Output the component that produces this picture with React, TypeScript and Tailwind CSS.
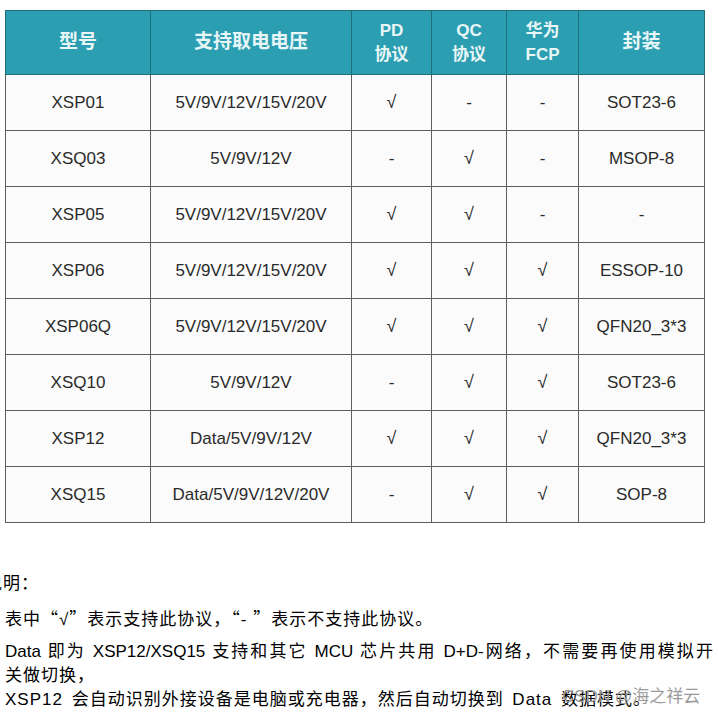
import React from "react";

type Row = {
  model: string;
  voltage: string;
  pd: boolean;
  qc: boolean;
  fcp: boolean;
  pkg: string;
};

const rows: Row[] = [
  { model: "XSP01", voltage: "5V/9V/12V/15V/20V", pd: true, qc: false, fcp: false, pkg: "SOT23-6" },
  { model: "XSQ03", voltage: "5V/9V/12V", pd: false, qc: true, fcp: false, pkg: "MSOP-8" },
  { model: "XSP05", voltage: "5V/9V/12V/15V/20V", pd: true, qc: true, fcp: false, pkg: "-" },
  { model: "XSP06", voltage: "5V/9V/12V/15V/20V", pd: true, qc: true, fcp: true, pkg: "ESSOP-10" },
  { model: "XSP06Q", voltage: "5V/9V/12V/15V/20V", pd: true, qc: true, fcp: true, pkg: "QFN20_3*3" },
  { model: "XSQ10", voltage: "5V/9V/12V", pd: false, qc: true, fcp: true, pkg: "SOT23-6" },
  { model: "XSP12", voltage: "Data/5V/9V/12V", pd: true, qc: true, fcp: true, pkg: "QFN20_3*3" },
  { model: "XSQ15", voltage: "Data/5V/9V/12V/20V", pd: false, qc: true, fcp: true, pkg: "SOP-8" },
];

const font = "font-['Liberation_Sans','Noto_Sans_CJK_SC',sans-serif]";
const cjk = "font-['Noto_Sans_CJK_SC',sans-serif]";

function Mark({ on }: { on: boolean }) {
  return <span className={on ? "text-[18px]" : ""}>{on ? "√" : "-"}</span>;
}

export default function App() {
  const th = "border border-[#1d6f7b] text-center align-middle font-bold text-[#e9f6f8]";
  const td = "border border-[#5e5e5e] text-center align-middle";

  return (
    <div className={`relative h-[718px] w-[718px] overflow-hidden bg-white text-[#2a2a2a] ${font}`}>
      <table className="ml-[5px] mt-[10px] w-[699px] table-fixed border-collapse">
        <colgroup>
          <col className="w-[145px]" />
          <col className="w-[201px]" />
          <col className="w-[80px]" />
          <col className="w-[75px]" />
          <col className="w-[72px]" />
          <col className="w-[126px]" />
        </colgroup>
        <thead>
          <tr className="h-[64px] bg-[#2b9fb1]">
            <th className={`${th} text-[19px]`}>型号</th>
            <th className={`${th} text-[19px]`}>支持取电电压</th>
            <th className={`${th} text-[17px] leading-[24px]`}>
              PD
              <br />
              协议
            </th>
            <th className={`${th} text-[17px] leading-[24px]`}>
              QC
              <br />
              协议
            </th>
            <th className={`${th} text-[17px] leading-[24px]`}>
              华为
              <br />
              FCP
            </th>
            <th className={`${th} text-[19px]`}>封装</th>
          </tr>
        </thead>
        <tbody className="bg-[#fbfbfb] text-[17px]">
          {rows.map((row) => (
            <tr key={row.model} className="h-[56px]">
              <td className={td}>{row.model}</td>
              <td className={td}>{row.voltage}</td>
              <td className={td}>
                <Mark on={row.pd} />
              </td>
              <td className={td}>
                <Mark on={row.qc} />
              </td>
              <td className={td}>
                <Mark on={row.fcp} />
              </td>
              <td className={td}>{row.pkg}</td>
            </tr>
          ))}
        </tbody>
      </table>

      <div className="mt-[47px] w-[710px] text-[17px] leading-[24px] text-black">
        <p className={`-ml-[15px] tracking-[1px] ${cjk}`}>说明：</p>
        <p className="ml-[5px] mt-[12px] tracking-[1px]">
          表中<span className={cjk}>“</span>√<span className={cjk}>”</span>表示支持此协议，
          <span className={cjk}>“</span>- <span className={cjk}>”</span>表示不支持此协议。
        </p>
        <div className="ml-[5px] mt-[8px] w-[708px]">
          <p className="[text-align-last:justify]">
            Data 即为 XSP12/XSQ15 支持和其它 MCU 芯片共用 D+D-网络，不需要再使用模拟开
          </p>
          <p className="tracking-[1px]">关做切换，</p>
          <p className="tracking-[1px] [word-spacing:3px]">
            XSP12 会自动识别外接设备是电脑或充电器，然后自动切换到 Data 数据模式。
          </p>
        </div>
      </div>

      <span className="absolute left-[562px] top-[685px] text-[17px] leading-[24px] text-[#9a9a9a]">
        CSDN @海之祥云
      </span>
    </div>
  );
}
